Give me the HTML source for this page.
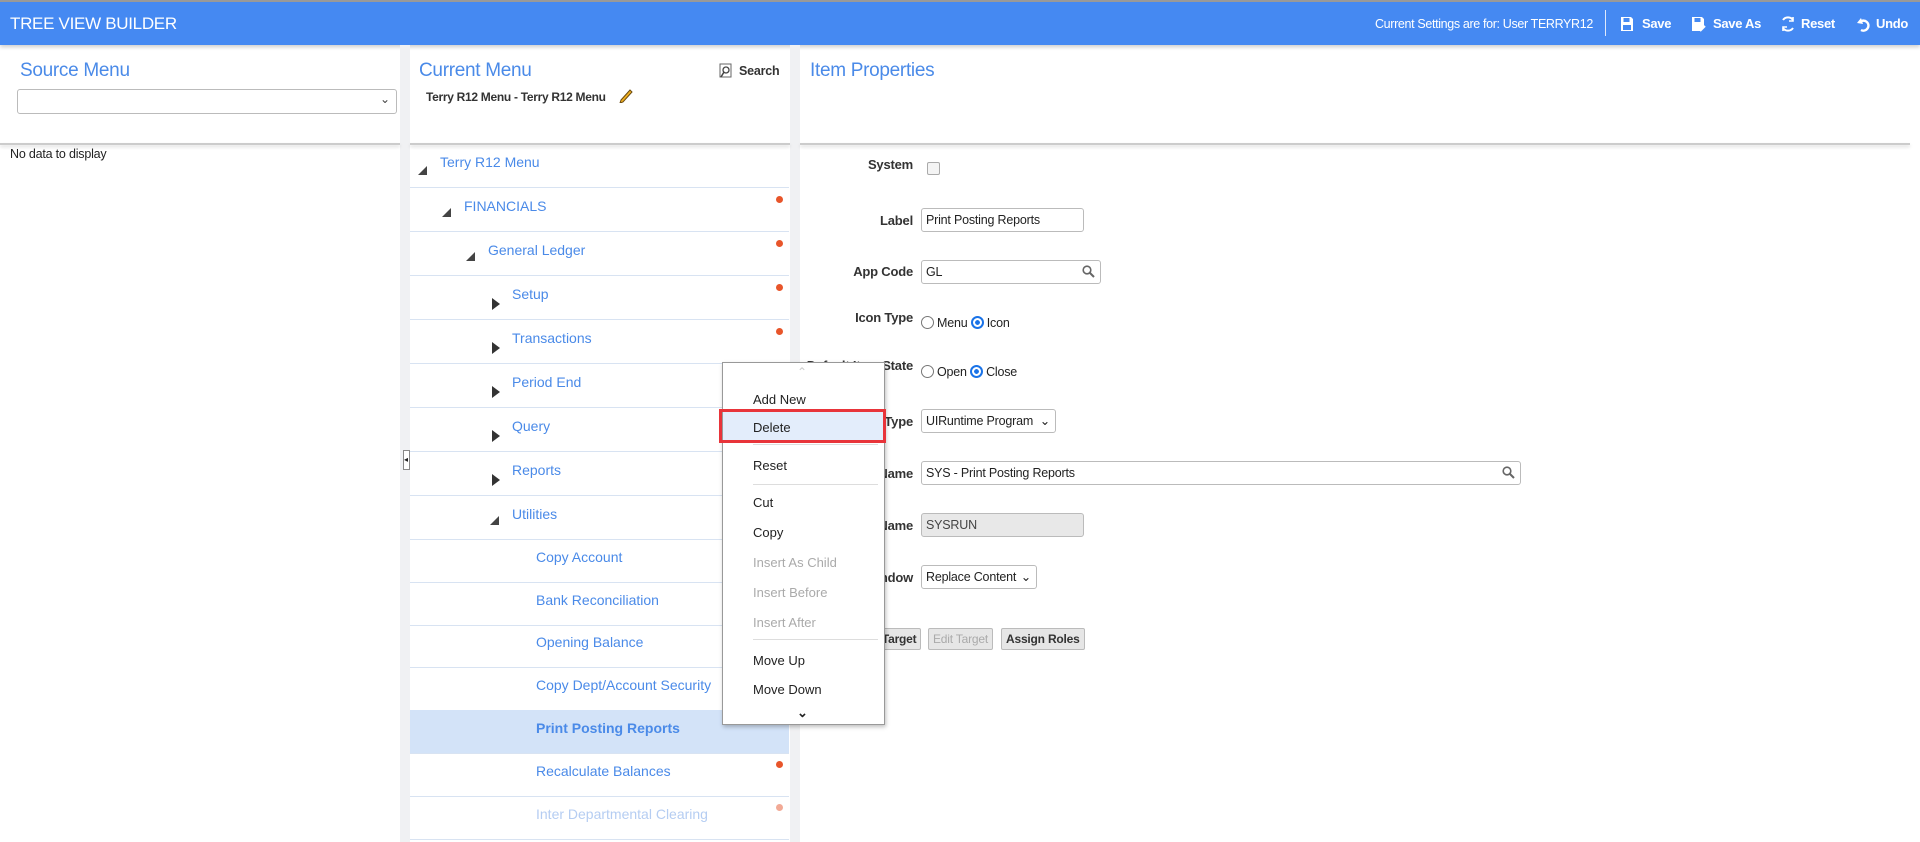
<!DOCTYPE html>
<html><head><meta charset="utf-8"><style>
*{box-sizing:border-box;margin:0;padding:0}
body{width:1920px;height:842px;overflow:hidden;background:#fff;font-family:"Liberation Sans",sans-serif;position:relative;color:#222}
.hdr{position:absolute;left:0;top:0;width:1920px;height:45px;background:#4589f2;border-top:2px solid #999;box-shadow:0 2px 4px rgba(0,0,0,.2);color:#fff}
.hdr .t{position:absolute;left:10px;top:12px;font-size:17px;letter-spacing:-.3px}
.hdr .r{position:absolute;top:15px;font-size:12.5px;letter-spacing:-.35px}
.hdr b{position:absolute;top:14px;font-size:13px;letter-spacing:-.3px}
.gap{position:absolute;top:45px;height:797px;background:#f0f1f3}
.h2{position:absolute;top:60px;font-size:19px;color:#4a8ae8;letter-spacing:-.3px}
.line{position:absolute;top:143px;height:2px;background:#ccc;box-shadow:0 2px 3px rgba(0,0,0,.15)}
.row{position:absolute;left:410px;width:379px;height:44px;border-bottom:1px solid #d8e3f2}
.row span{position:absolute;top:10px;font-size:14px;color:#4a8ae8}
.row .dot{position:absolute;left:366px;top:8px;width:7px;height:7px;border-radius:50%;background:#e8552a}
.tri{position:absolute;top:20px;width:0;height:0}
.open{border-left:9px solid transparent;border-bottom:9px solid #444}
.clo{border-top:6px solid transparent;border-bottom:6px solid transparent;border-left:8px solid #333;top:22px}
.lbl{position:absolute;right:1007px;font-size:13px;font-weight:bold;color:#333;text-align:right;white-space:nowrap;letter-spacing:-.2px}
.inp{position:absolute;left:921px;height:24px;border:1px solid #bbb;border-radius:3px;font-size:12.5px;padding:4px 4px;background:#fff;letter-spacing:-.2px;white-space:nowrap}
.rad{display:inline-block;width:13px;height:13px;border:1.5px solid #777;border-radius:50%;vertical-align:-2px;margin-right:3px}
.rad.on{border:2px solid #1a73e8;background:radial-gradient(#1a73e8 35%,#fff 40%)}
.menu{position:absolute;left:722px;top:362px;width:163px;height:363px;background:#fff;border:1px solid #999;box-shadow:1px 2px 4px rgba(0,0,0,.25);font-size:13px}
.menu div{position:absolute;left:30px}
.sep{height:1px;background:#ddd;width:125px}
.btn{position:absolute;top:628px;height:22px;border:1px solid #bbb;border-radius:2px;background:#e6e6e6;font-size:12px;font-weight:bold;padding:3px 4px;color:#333;letter-spacing:-.2px}
</style></head><body>
<div class="hdr">
<div class="t">TREE VIEW BUILDER</div>
<div class="r" style="left:1375px">Current Settings are for: User TERRYR12</div>
<div style="position:absolute;left:1605px;top:8px;width:1px;height:26px;background:#dfe9fb"></div>
<svg style="position:absolute;left:1620px;top:14px" width="14" height="16" viewBox="0 0 14 16"><path d="M1 1h10l2 2v12H1z" fill="#fff"/><rect x="3.5" y="2" width="6" height="4" fill="#4589f2"/><rect x="3" y="9" width="8" height="5" fill="#4589f2"/></svg>
<b style="left:1642px">Save</b>
<svg style="position:absolute;left:1691px;top:14px" width="15" height="16" viewBox="0 0 15 16"><path d="M1 1h10l2 2v7l-4 5H1z" fill="#fff"/><rect x="3.5" y="2" width="6" height="4" fill="#4589f2"/><path d="M9 15l5-5" stroke="#fff" stroke-width="2"/></svg>
<b style="left:1713px">Save As</b>
<svg style="position:absolute;left:1780px;top:14px" width="16" height="16" viewBox="0 0 16 16"><path d="M3 4A6 6 0 0 1 13 4M13 12A6 6 0 0 1 3 12" fill="none" stroke="#fff" stroke-width="2"/><path d="M13 1v4h-4M3 15v-4h4" fill="none" stroke="#fff" stroke-width="1.6"/></svg>
<b style="left:1801px">Reset</b>
<svg style="position:absolute;left:1856px;top:14px" width="14" height="16" viewBox="0 0 14 16"><path d="M4 6A5 5 0 1 1 5 14" fill="none" stroke="#fff" stroke-width="2.4"/><path d="M1 7l4-5 2 6z" fill="#fff"/></svg>
<b style="left:1876px">Undo</b>
</div>
<div class="gap" style="left:400px;width:10px"></div>
<div class="gap" style="left:790px;width:10px"></div>
<div class="h2" style="left:20px">Source Menu</div>
<div class="h2" style="left:419px">Current Menu</div>
<div class="h2" style="left:810px">Item Properties</div>
<div style="position:absolute;left:17px;top:89px;width:380px;height:25px;border:1px solid #bbb;border-radius:3px"><span style="position:absolute;right:6px;top:2px;font-size:12px;color:#444">&#8964;</span></div>
<svg style="position:absolute;left:719px;top:63px" width="14" height="16" viewBox="0 0 14 16"><rect x="1" y="1" width="11" height="13" fill="none" stroke="#666"/><circle cx="7" cy="7" r="3" fill="none" stroke="#444" stroke-width="1.3"/><path d="M5 9l-3 5" stroke="#444" stroke-width="1.5"/></svg>
<div style="position:absolute;left:739px;top:64px;font-size:12.5px;font-weight:bold;color:#333;letter-spacing:-.2px">Search</div>
<div style="position:absolute;left:426px;top:90px;font-size:12px;font-weight:bold;color:#333;letter-spacing:-.3px">Terry R12 Menu - Terry R12 Menu</div>
<svg style="position:absolute;left:618px;top:87px" width="16" height="16" viewBox="0 0 16 16"><path d="M3 13l9-10 2 2-9 10-3 1z" fill="#f0b020" stroke="#6a4a10" stroke-width="1"/></svg>
<div class="line" style="left:0;width:400px"></div>
<div class="line" style="left:410px;width:380px"></div>
<div class="line" style="left:800px;width:1110px"></div>
<div style="position:absolute;left:10px;top:147px;font-size:12.5px;color:#222;letter-spacing:-.2px">No data to display</div>
<div style="position:absolute;left:403px;top:450px;width:7px;height:20px;border:1px solid #888;background:#fff;font-size:8px;line-height:18px">&#9666;</div>

<div class="row" style="top:144px"><i class="tri open" style="left:8px;top:22px"></i><span style="left:30px">Terry R12 Menu</span></div>
<div class="row" style="top:188px"><i class="tri open" style="left:32px"></i><span style="left:54px">FINANCIALS</span><i class="dot"></i></div>
<div class="row" style="top:232px"><i class="tri open" style="left:56px"></i><span style="left:78px">General Ledger</span><i class="dot"></i></div>
<div class="row" style="top:276px"><i class="tri clo" style="left:82px"></i><span style="left:102px">Setup</span><i class="dot"></i></div>
<div class="row" style="top:320px"><i class="tri clo" style="left:82px"></i><span style="left:102px">Transactions</span><i class="dot"></i></div>
<div class="row" style="top:364px"><i class="tri clo" style="left:82px"></i><span style="left:102px">Period End</span></div>
<div class="row" style="top:408px"><i class="tri clo" style="left:82px"></i><span style="left:102px">Query</span></div>
<div class="row" style="top:452px"><i class="tri clo" style="left:82px"></i><span style="left:102px">Reports</span></div>
<div class="row" style="top:496px"><i class="tri open" style="left:80px"></i><span style="left:102px">Utilities</span></div>
<div class="row" style="top:539px"><span style="left:126px">Copy Account</span></div>
<div class="row" style="top:582px"><span style="left:126px">Bank Reconciliation</span></div>
<div class="row" style="top:624px"><span style="left:126px">Opening Balance</span></div>
<div class="row" style="top:667px"><span style="left:126px">Copy Dept/Account Security</span></div>
<div class="row" style="top:710px;background:#d3e3f8"><span style="left:126px;font-weight:bold">Print Posting Reports</span><i class="dot"></i></div>
<div class="row" style="top:753px"><span style="left:126px">Recalculate Balances</span><i class="dot"></i></div>
<div class="row" style="top:796px"><span style="left:126px;color:#b5cdf2">Inter Departmental Clearing</span><i class="dot" style="background:#f2aa96"></i></div>

<div class="lbl" style="top:157px">System</div>
<div style="position:absolute;left:927px;top:162px;width:13px;height:13px;border:1px solid #aaa;border-radius:2px;background:#f4f4f4"></div>
<div class="lbl" style="top:213px">Label</div>
<div class="inp" style="top:208px;width:163px">Print Posting Reports</div>
<div class="lbl" style="top:264px">App Code</div>
<div class="inp" style="top:260px;width:180px">GL<svg style="position:absolute;right:5px;top:4px" width="13" height="13" viewBox="0 0 13 13"><circle cx="5" cy="5" r="3.8" fill="none" stroke="#666" stroke-width="1.6"/><path d="M8 8l4 4" stroke="#666" stroke-width="2"/></svg></div>
<div class="lbl" style="top:310px">Icon Type</div>
<div style="position:absolute;left:921px;top:316px;font-size:12.5px;letter-spacing:-.2px"><i class="rad"></i>Menu <i class="rad on"></i>Icon</div>
<div class="lbl" style="top:358px">Default Item State</div>
<div style="position:absolute;left:921px;top:365px;font-size:12.5px;letter-spacing:-.2px"><i class="rad"></i>Open <i class="rad on"></i>Close</div>
<div class="lbl" style="top:414px">Program Type</div>
<div class="inp" style="top:409px;width:135px">UIRuntime Program<span style="position:absolute;right:5px;top:3px">&#8964;</span></div>
<div class="lbl" style="top:466px">Program Name</div>
<div class="inp" style="top:461px;width:600px">SYS - Print Posting Reports<svg style="position:absolute;right:5px;top:4px" width="13" height="13" viewBox="0 0 13 13"><circle cx="5" cy="5" r="3.8" fill="none" stroke="#666" stroke-width="1.6"/><path d="M8 8l4 4" stroke="#666" stroke-width="2"/></svg></div>
<div class="lbl" style="top:518px">Run Name</div>
<div class="inp" style="top:513px;width:163px;background:#e8e8e8;color:#444">SYSRUN</div>
<div class="lbl" style="top:570px">Target Window</div>
<div class="inp" style="top:565px;width:116px">Replace Content<span style="position:absolute;right:5px;top:3px">&#8964;</span></div>
<div class="btn" style="left:851px">Add Target</div>
<div class="btn" style="left:928px;color:#aaa;font-weight:normal">Edit Target</div>
<div class="btn" style="left:1001px">Assign Roles</div>

<div class="menu">
<div style="left:74px;top:2px;color:#ccc;font-size:12px">&#8963;</div>
<div style="top:29px">Add New</div>
<div style="left:0;top:48px;width:161px;height:30px;background:#e3edfb"></div>
<div style="left:-4px;top:46px;width:167px;height:34px;border:3px solid #e8343a"></div>
<div style="top:57px">Delete</div>
<div class="sep" style="top:81px"></div>
<div style="top:95px">Reset</div>
<div class="sep" style="top:121px"></div>
<div style="top:132px">Cut</div>
<div style="top:162px">Copy</div>
<div style="top:192px;color:#aaa">Insert As Child</div>
<div style="top:222px;color:#aaa">Insert Before</div>
<div style="top:252px;color:#aaa">Insert After</div>
<div class="sep" style="top:276px"></div>
<div style="top:290px">Move Up</div>
<div style="top:319px">Move Down</div>
<div style="left:74px;top:342px;font-size:13px;font-weight:bold">&#8964;</div>
</div>
</body></html>
